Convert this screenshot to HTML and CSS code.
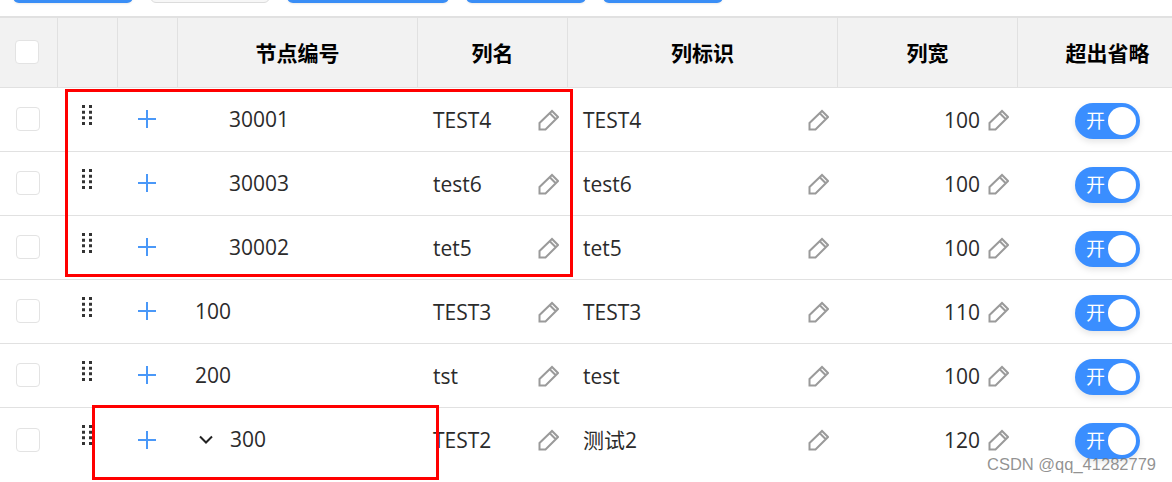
FILE: index.html
```html
<!DOCTYPE html>
<html lang="zh">
<head>
<meta charset="utf-8">
<title>列配置</title>
<link rel="stylesheet" href="styles.css">
</head>
<body>
<svg class="defs" width="0" height="0" aria-hidden="true">
  <symbol id="pencil" viewBox="0 0 22 22">
    <path d="M2.5 14 15 2l6 6L8.5 20.5h-6z M13 4.5 18.5 10" fill="none" stroke="currentColor" stroke-width="2"/>
  </symbol>
  <symbol id="plus" viewBox="0 0 18 18">
    <path d="M9 0v18M0 9h18" fill="none" stroke="currentColor" stroke-width="2"/>
  </symbol>
  <symbol id="drag" viewBox="0 0 11 20">
    <path d="M0 0h3v3H0zM7 0h3v3H7zM0 5.7h3v3H0zM7 5.7h3v3H7zM0 11.3h3v3H0zM7 11.3h3v3H7zM0 17h3v3H0zM7 17h3v3H7z" fill="currentColor"/>
  </symbol>
  <symbol id="chev" viewBox="0 0 14 9">
    <path d="M1 1.5 7 7.5l6-6" fill="none" stroke="currentColor" stroke-width="2"/>
  </symbol>
</svg>
<div class="page">
  <div class="toolbar">
    <span class="btn blue w120"></span>
    <span class="btn plain w120"></span>
    <span class="btn blue w162"></span>
    <span class="btn blue w120"></span>
    <span class="btn blue w120"></span>
  </div>
  <table class="grid">
    <colgroup>
      <col class="c-check"><col class="c-drag"><col class="c-add"><col class="c-id"><col class="c-name"><col class="c-key"><col class="c-width"><col class="c-ell">
    </colgroup>
    <thead>
      <tr>
        <th><span class="check head"></span></th><th></th><th></th>
        <th>节点编号</th><th>列名</th><th>列标识</th><th>列宽</th><th>超出省略</th>
      </tr>
    </thead>
    <tbody>
      <tr>
        <td><span class="check"></span></td>
        <td class="center"><svg class="drag"><use href="#drag"/></svg></td>
        <td class="center"><svg class="plus"><use href="#plus"/></svg></td>
        <td class="id child"><span class="idtext">30001</span></td>
        <td><div class="edit"><span>TEST4</span><svg class="pencil"><use href="#pencil"/></svg></div></td>
        <td><div class="edit"><span>TEST4</span><svg class="pencil"><use href="#pencil"/></svg></div></td>
        <td><div class="edit end"><span>100</span><svg class="pencil"><use href="#pencil"/></svg></div></td>
        <td class="center"><span class="switch">开<i class="knob"></i></span></td>
      </tr>
      <tr>
        <td><span class="check"></span></td>
        <td class="center"><svg class="drag"><use href="#drag"/></svg></td>
        <td class="center"><svg class="plus"><use href="#plus"/></svg></td>
        <td class="id child"><span class="idtext">30003</span></td>
        <td><div class="edit"><span>test6</span><svg class="pencil"><use href="#pencil"/></svg></div></td>
        <td><div class="edit"><span>test6</span><svg class="pencil"><use href="#pencil"/></svg></div></td>
        <td><div class="edit end"><span>100</span><svg class="pencil"><use href="#pencil"/></svg></div></td>
        <td class="center"><span class="switch">开<i class="knob"></i></span></td>
      </tr>
      <tr>
        <td><span class="check"></span></td>
        <td class="center"><svg class="drag"><use href="#drag"/></svg></td>
        <td class="center"><svg class="plus"><use href="#plus"/></svg></td>
        <td class="id child"><span class="idtext">30002</span></td>
        <td><div class="edit"><span>tet5</span><svg class="pencil"><use href="#pencil"/></svg></div></td>
        <td><div class="edit"><span>tet5</span><svg class="pencil"><use href="#pencil"/></svg></div></td>
        <td><div class="edit end"><span>100</span><svg class="pencil"><use href="#pencil"/></svg></div></td>
        <td class="center"><span class="switch">开<i class="knob"></i></span></td>
      </tr>
      <tr>
        <td><span class="check"></span></td>
        <td class="center"><svg class="drag"><use href="#drag"/></svg></td>
        <td class="center"><svg class="plus"><use href="#plus"/></svg></td>
        <td class="id"><span class="idtext">100</span></td>
        <td><div class="edit"><span>TEST3</span><svg class="pencil"><use href="#pencil"/></svg></div></td>
        <td><div class="edit"><span>TEST3</span><svg class="pencil"><use href="#pencil"/></svg></div></td>
        <td><div class="edit end"><span>110</span><svg class="pencil"><use href="#pencil"/></svg></div></td>
        <td class="center"><span class="switch">开<i class="knob"></i></span></td>
      </tr>
      <tr>
        <td><span class="check"></span></td>
        <td class="center"><svg class="drag"><use href="#drag"/></svg></td>
        <td class="center"><svg class="plus"><use href="#plus"/></svg></td>
        <td class="id"><span class="idtext">200</span></td>
        <td><div class="edit"><span>tst</span><svg class="pencil"><use href="#pencil"/></svg></div></td>
        <td><div class="edit"><span>test</span><svg class="pencil"><use href="#pencil"/></svg></div></td>
        <td><div class="edit end"><span>100</span><svg class="pencil"><use href="#pencil"/></svg></div></td>
        <td class="center"><span class="switch">开<i class="knob"></i></span></td>
      </tr>
      <tr class="last">
        <td><span class="check"></span></td>
        <td class="center"><svg class="drag"><use href="#drag"/></svg></td>
        <td class="center"><svg class="plus"><use href="#plus"/></svg></td>
        <td class="id parent"><svg class="chev"><use href="#chev"/></svg><span class="idtext">300</span></td>
        <td><div class="edit"><span>TEST2</span><svg class="pencil"><use href="#pencil"/></svg></div></td>
        <td><div class="edit"><span>测试2</span><svg class="pencil"><use href="#pencil"/></svg></div></td>
        <td><div class="edit end"><span>120</span><svg class="pencil"><use href="#pencil"/></svg></div></td>
        <td class="center"><span class="switch">开<i class="knob"></i></span></td>
      </tr>
    </tbody>
  </table>
  <div class="mark mark-a"></div>
  <div class="mark mark-b"></div>
  <div class="watermark">CSDN @qq_41282779</div>
</div>
</body>
</html>
```
FILE: styles.css
```css
* { box-sizing: border-box; }
html, body { margin: 0; padding: 0; background: #fff; }
body { width: 1172px; height: 482px; overflow: hidden; font-family: "Open Sans", "Noto Sans CJK SC", sans-serif; color: #2b2b2b; }
.defs { position: absolute; }
.page { position: relative; width: 1172px; height: 482px; overflow: hidden; }

.toolbar { height: 16px; padding-left: 13px; display: flex; align-items: flex-end; gap: 17px; overflow: hidden; }
.btn { display: block; flex: none; height: 30px; margin-bottom: 13px; border-radius: 6px; }
.btn.blue { background: #3a8ef6; box-shadow: 0 1px 2px rgba(0,0,0,.08); }
.btn.plain { background: #f7f7f7; border: 1px solid #dcdcdc; }
.w120 { width: 120px; }
.w162 { width: 162px; }

.grid { width: 1198px; table-layout: fixed; border-collapse: separate; border-spacing: 0; border-top: 2px solid #e1e1e1; font-size: 21px; }
.c-check { width: 58px; }
.c-drag, .c-add { width: 60px; }
.c-id { width: 240px; }
.c-name { width: 150px; }
.c-key { width: 270px; }
.c-width, .c-ell { width: 180px; }

th { height: 70px; padding: 0 0 2px; background: #f2f2f2; border-right: 1px solid #e1e1e1; border-bottom: 1px solid #e1e1e1; color: #000; font-size: 21px; font-weight: 700; text-align: center; vertical-align: middle; }
td { height: 64px; padding: 0; border-bottom: 1px solid #e1e1e1; vertical-align: middle; line-height: 28px; }
.last td { border-bottom: 0; }
.center { text-align: center; }

.check { display: block; width: 24px; height: 24px; margin: -1px 0 0 16px; background: #fff; border: 1px solid #e3e3e3; border-radius: 4px; }
.check.head { margin: 1px 0 0 15px; }

.drag { display: block; width: 11px; height: 20px; margin: -10px 0 0 24px; color: #333; }
.plus { display: block; width: 18px; height: 18px; margin: -1px 0 0 20px; color: #4a98f8; }
.id { padding-left: 17px; }
.id.child { padding-left: 51px; }
.id.parent { padding-left: 21px; }
.idtext { position: relative; top: -1px; }
.chev { display: inline-block; width: 14px; height: 9px; margin-right: 17px; color: #222; vertical-align: 4px; }

.edit { display: flex; align-items: center; justify-content: space-between; padding: 0 9px 0 15px; }
.edit.end { justify-content: flex-end; gap: 7px; }
.pencil { display: block; flex: none; width: 22px; height: 22px; color: #9a9a9a; }

.switch { display: block; position: relative; width: 65px; height: 36px; margin: 2px 0 0 57px; padding-left: 11px; background: #3a8eff; border-radius: 18px; color: #fff; font-size: 19px; line-height: 36px; text-align: left; box-shadow: 0 3px 6px rgba(0,0,0,.1); }
.knob { position: absolute; top: 4px; right: 4px; width: 28px; height: 28px; background: #fff; border-radius: 50%; }

.mark { position: absolute; border: 3px solid #f00; }
.mark-a { left: 65px; top: 89px; width: 508px; height: 188px; }
.mark-b { left: 92px; top: 405px; width: 347px; height: 75px; }
.watermark { position: absolute; left: 987px; top: 455px; font-family: "Liberation Sans", sans-serif; font-size: 16.5px; line-height: 18px; color: rgba(110,110,110,.75); white-space: nowrap; }
```
